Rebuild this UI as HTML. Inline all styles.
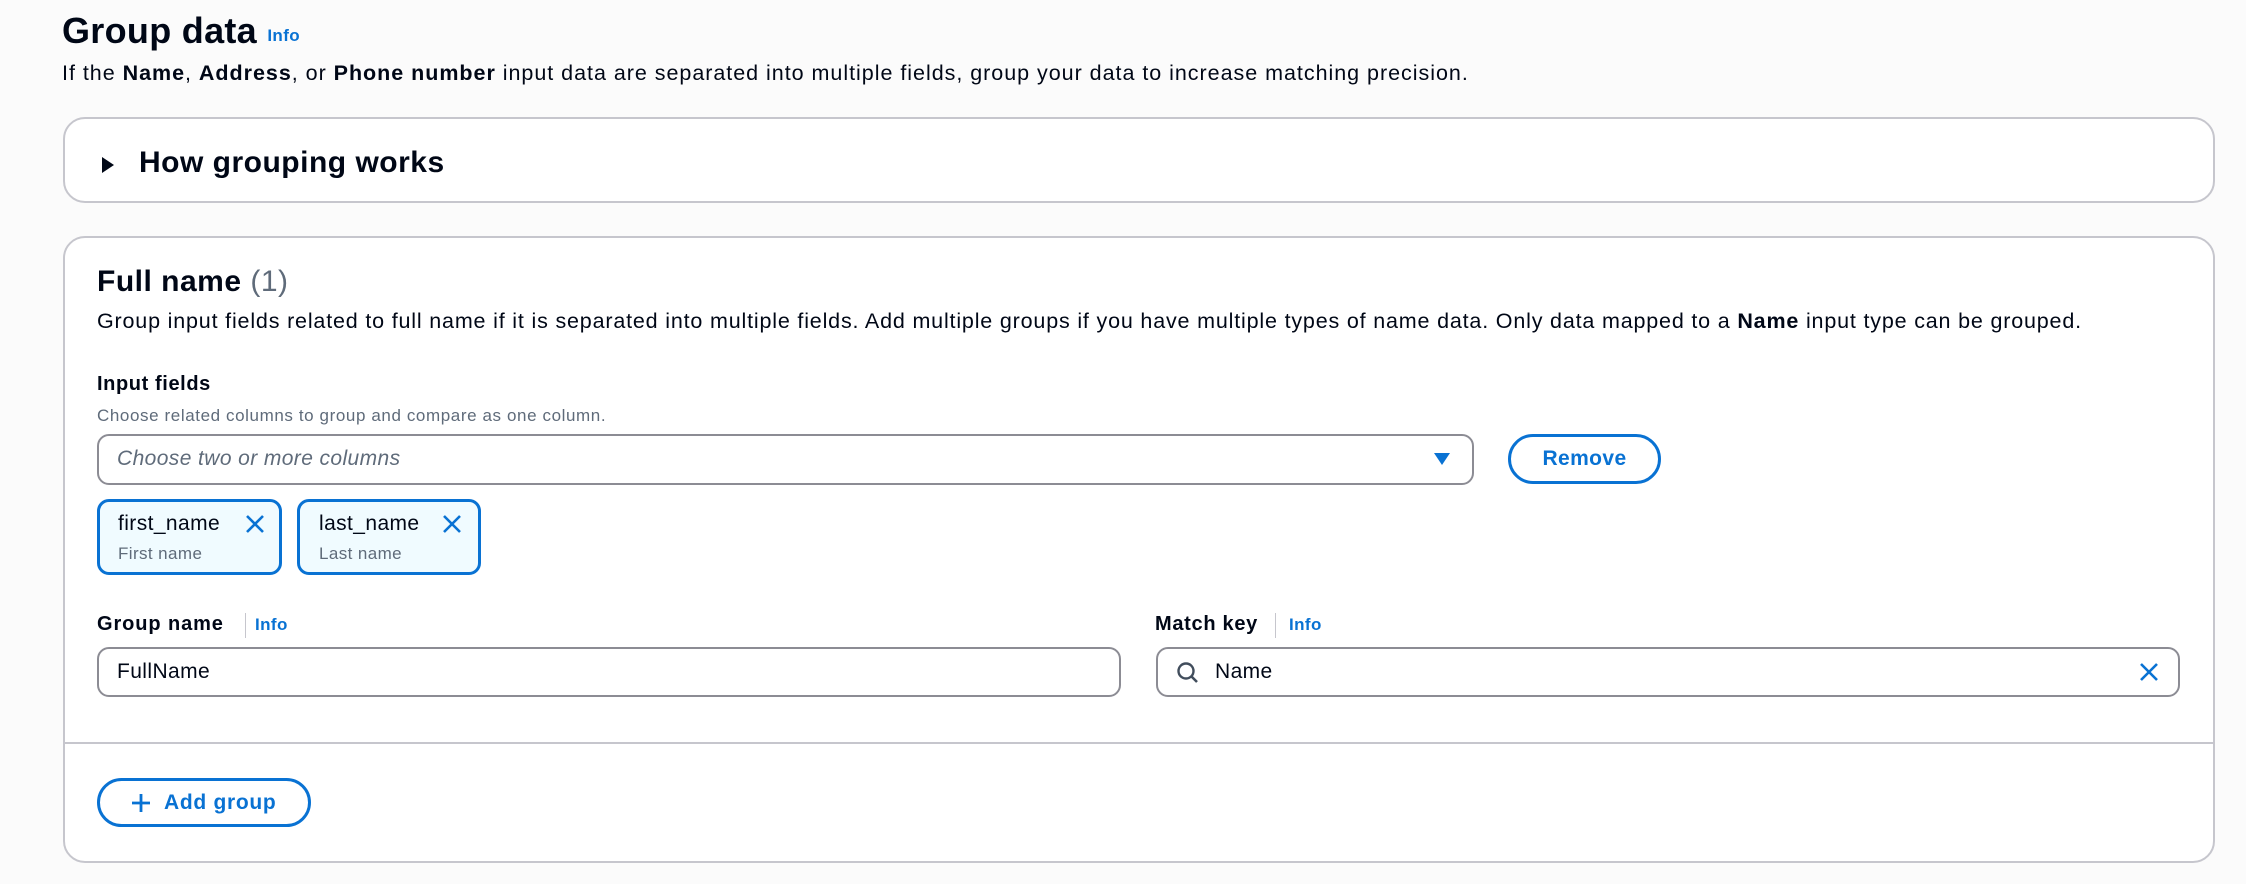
<!DOCTYPE html>
<html><head><meta charset="utf-8"><style>
*{box-sizing:border-box;margin:0;padding:0}
body{width:2246px;height:884px;background:#fbfbfb;font-family:"Liberation Sans",sans-serif;color:#000716;position:relative;overflow:hidden;letter-spacing:0.4px}
.a{position:absolute;white-space:nowrap}
.box{position:absolute;background:#fff;border:2px solid #c6c6cd;border-radius:22px}
.inp{position:absolute;background:#fff;border:2px solid #8c8c94;border-radius:12px}
.blue{color:#0972d3}
.tok{position:absolute;background:#f0fbff;border:3px solid #0972d3;border-radius:12px;top:499px;height:76px}
.btn{position:absolute;border:3px solid #0972d3;border-radius:30px;color:#0972d3;font-weight:bold;font-size:21px;display:flex;align-items:center;justify-content:center;background:#fff}
.desc{font-size:21.5px;letter-spacing:1px}
</style></head><body>
<div class="a" style="left:62px;top:10px;font-size:36px;font-weight:bold;letter-spacing:0.3px">Group data <span class="blue" style="font-size:17px;vertical-align:2px;letter-spacing:0.4px">Info</span></div>
<div class="a desc" style="left:62px;top:61px;letter-spacing:0.97px">If the <b>Name</b>, <b>Address</b>, or <b>Phone number</b> input data are separated into multiple fields, group your data to increase matching precision.</div>

<div class="box" style="left:63px;top:117px;width:2152px;height:86px"></div>
<svg class="a" style="left:101px;top:156px" width="14" height="18"><path d="M1 1 L13 9 L1 17Z" fill="#000716"/></svg>
<div class="a" style="left:139px;top:146px;font-size:30px;font-weight:bold;letter-spacing:0.5px">How grouping works</div>

<div class="box" style="left:63px;top:236px;width:2152px;height:627px"></div>
<div style="position:absolute;left:65px;top:742px;width:2148px;height:2px;background:#c6c6cd"></div>
<div class="a" style="left:97px;top:265px;font-size:30px;font-weight:bold;letter-spacing:0.5px">Full name <span style="font-weight:normal;color:#5f6b7a">(1)</span></div>
<div class="a desc" style="left:97px;top:309px;letter-spacing:0.82px">Group input fields related to full name if it is separated into multiple fields. Add multiple groups if you have multiple types of name data. Only data mapped to a <b>Name</b> input type can be grouped.</div>
<div class="a" style="left:97px;top:373px;font-size:20px;font-weight:bold;letter-spacing:0.6px">Input fields</div>
<div class="a" style="left:97px;top:406px;font-size:17px;color:#5f6b7a;letter-spacing:0.6px">Choose related columns to group and compare as one column.</div>

<div class="inp" style="left:97px;top:434px;width:1377px;height:51px"></div>
<div class="a" style="left:117px;top:447px;font-size:21px;font-style:italic;color:#5f6b7a">Choose two or more columns</div>
<svg class="a" style="left:1433px;top:452px" width="18" height="14"><path d="M1 1 H17 L9 13Z" fill="#0972d3"/></svg>
<div class="btn" style="left:1508px;top:434px;width:153px;height:50px">Remove</div>

<div class="tok" style="left:97px;width:185px"></div>
<div class="a" style="left:118px;top:512px;font-size:21px">first_name</div>
<div class="a" style="left:118px;top:544px;font-size:17px;color:#5f6b7a">First name</div>
<svg class="a" style="left:245px;top:514px" width="20" height="20"><path d="M2 2 L18 18 M18 2 L2 18" stroke="#0972d3" stroke-width="2.6"/></svg>
<div class="tok" style="left:297px;width:184px"></div>
<div class="a" style="left:319px;top:512px;font-size:21px">last_name</div>
<div class="a" style="left:319px;top:544px;font-size:17px;color:#5f6b7a">Last name</div>
<svg class="a" style="left:442px;top:514px" width="20" height="20"><path d="M2 2 L18 18 M18 2 L2 18" stroke="#0972d3" stroke-width="2.6"/></svg>

<div class="a" style="left:97px;top:613px;font-size:20px;font-weight:bold;letter-spacing:0.9px">Group name</div>
<div style="position:absolute;left:245px;top:613px;width:1px;height:25px;background:#c6c6cd"></div>
<div class="a blue" style="left:255px;top:615px;font-size:17px;font-weight:bold">Info</div>
<div class="inp" style="left:97px;top:647px;width:1024px;height:50px"></div>
<div class="a" style="left:117px;top:660px;font-size:21px">FullName</div>

<div class="a" style="left:1155px;top:613px;font-size:20px;font-weight:bold;letter-spacing:0.7px">Match key</div>
<div style="position:absolute;left:1275px;top:613px;width:1px;height:25px;background:#c6c6cd"></div>
<div class="a blue" style="left:1289px;top:615px;font-size:17px;font-weight:bold">Info</div>
<div class="inp" style="left:1156px;top:647px;width:1024px;height:50px"></div>
<svg class="a" style="left:1176px;top:661px" width="24" height="24"><circle cx="10" cy="10" r="7.5" fill="none" stroke="#414d5c" stroke-width="2.4"/><path d="M15.5 15.5 L21 21" stroke="#414d5c" stroke-width="2.6"/></svg>
<div class="a" style="left:1215px;top:660px;font-size:21px">Name</div>
<svg class="a" style="left:2139px;top:662px" width="20" height="20"><path d="M2 2 L18 18 M18 2 L2 18" stroke="#0972d3" stroke-width="2.6"/></svg>

<div class="btn" style="left:97px;top:778px;width:214px;height:49px;justify-content:flex-start;padding-left:30px;letter-spacing:0.7px"><svg width="22" height="22" style="margin-right:12px"><path d="M11 2 V20 M2 11 H20" stroke="#0972d3" stroke-width="2.8"/></svg>Add group</div>
</body></html>
